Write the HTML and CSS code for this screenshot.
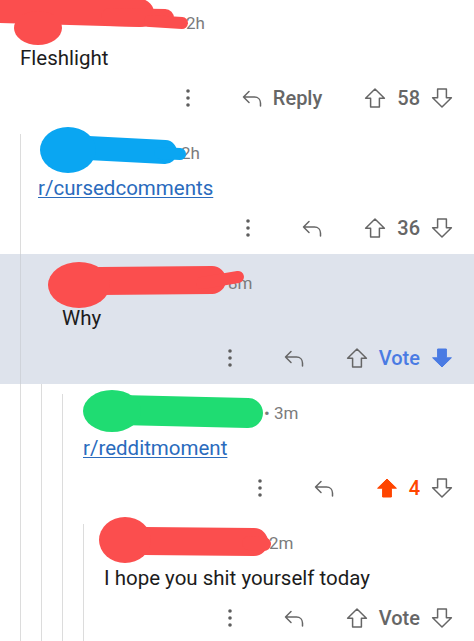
FILE: index.html
```html
<!DOCTYPE html>
<html>
<head>
<meta charset="utf-8">
<link rel="stylesheet" href="styles.css">
</head>
<body>
<svg class="defs" width="0" height="0">
  <defs>
    <path id="arrow" d="M10 1 L19.4 10.2 H14.4 V19 H5.6 V10.2 H0.6 Z"/>
    <path id="reply" d="M7 3.5 L1.5 9 L7 14.5 M1.5 9 H12.5 C16 9 18.5 11.5 18.5 15 V18"/>
  </defs>
</svg>

<div class="comment first">
  <div class="content">
    <div class="head">
      <svg class="scrib" width="166" height="24">
        <g class="red">
          <path d="M-20 -2 L120 2" stroke-width="28"/>
          <path d="M90 6 L145 7" stroke-width="18"/>
          <path d="M130 10 L162 12" stroke-width="12"/>
          <ellipse cx="18" cy="17" rx="24" ry="17"/>
        </g>
      </svg>
      <span class="time">2h</span>
    </div>
    <p class="text">Fleshlight</p>
    <div class="actions">
      <svg class="dots" width="4" height="18"><circle cx="2" cy="2" r="1.8"/><circle cx="2" cy="9" r="1.8"/><circle cx="2" cy="16" r="1.8"/></svg>
      <svg class="ico" width="20" height="20"><use href="#reply" class="ln"/></svg>
      <span class="lbl">Reply</span>
      <svg class="ico up" width="20" height="20"><use href="#arrow" class="ln"/></svg>
      <span class="count">58</span>
      <svg class="ico down" width="20" height="20"><use href="#arrow" class="ln"/></svg>
    </div>
  </div>
</div>

<div class="comment">
  <div class="rail own"></div>
  <div class="content shift">
    <div class="head">
      <svg class="scrib" width="143" height="24">
        <g class="blue">
          <path d="M50 7 L127 11" stroke-width="24"/>
          <path d="M122 12 L142 13" stroke-width="12"/>
          <ellipse cx="30" cy="9" rx="28" ry="23"/>
        </g>
      </svg>
      <span class="time">2h</span>
    </div>
    <p class="text"><a class="link" href="#">r/cursedcomments</a></p>
    <div class="actions">
      <svg class="dots" width="4" height="18"><circle cx="2" cy="2" r="1.8"/><circle cx="2" cy="9" r="1.8"/><circle cx="2" cy="16" r="1.8"/></svg>
      <svg class="ico" width="20" height="20"><use href="#reply" class="ln"/></svg>
      <svg class="ico up" width="20" height="20"><use href="#arrow" class="ln"/></svg>
      <span class="count">36</span>
      <svg class="ico down" width="20" height="20"><use href="#arrow" class="ln"/></svg>
    </div>
  </div>
</div>

<div class="comment hl">
  <div class="rail"></div>
  <div class="rail none"></div>
  <div class="content">
    <div class="head">
      <svg class="scrib" width="166" height="24">
        <g class="red">
          <path d="M38 10 L150 9" stroke-width="28"/>
          <path d="M140 12 L176 6" stroke-width="12"/>
          <ellipse cx="17" cy="14" rx="31" ry="23"/>
        </g>
      </svg>
      <span class="time">8m</span>
    </div>
    <p class="text">Why</p>
    <div class="actions">
      <svg class="dots" width="4" height="18"><circle cx="2" cy="2" r="1.8"/><circle cx="2" cy="9" r="1.8"/><circle cx="2" cy="16" r="1.8"/></svg>
      <svg class="ico" width="20" height="20"><use href="#reply" class="ln"/></svg>
      <svg class="ico up" width="20" height="20"><use href="#arrow" class="ln"/></svg>
      <span class="count blue-t">Vote</span>
      <svg class="ico down" width="20" height="20"><use href="#arrow" class="fill-blue"/></svg>
    </div>
  </div>
</div>

<div class="comment">
  <div class="rail"></div>
  <div class="rail"></div>
  <div class="rail own"></div>
  <div class="content">
    <div class="head">
      <svg class="scrib" width="181" height="24">
        <g class="green">
          <path d="M37 9 L165 12" stroke-width="30"/>
          <ellipse cx="29" cy="10" rx="29" ry="21"/>
        </g>
      </svg>
      <span class="time">• 3m</span>
    </div>
    <p class="text"><a class="link" href="#">r/redditmoment</a></p>
    <div class="actions">
      <svg class="dots" width="4" height="18"><circle cx="2" cy="2" r="1.8"/><circle cx="2" cy="9" r="1.8"/><circle cx="2" cy="16" r="1.8"/></svg>
      <svg class="ico" width="20" height="20"><use href="#reply" class="ln"/></svg>
      <svg class="ico up" width="20" height="20"><use href="#arrow" class="fill-orange"/></svg>
      <span class="count orange-t">4</span>
      <svg class="ico down" width="20" height="20"><use href="#arrow" class="ln"/></svg>
    </div>
  </div>
</div>

<div class="comment">
  <div class="rail"></div>
  <div class="rail"></div>
  <div class="rail"></div>
  <div class="rail own"></div>
  <div class="content">
    <div class="head">
      <svg class="scrib" width="165" height="24">
        <g class="red">
          <path d="M40 10 L150 11" stroke-width="28"/>
          <path d="M145 12 L160 13" stroke-width="14"/>
          <ellipse cx="21" cy="9" rx="26" ry="23"/>
        </g>
      </svg>
      <span class="time">2m</span>
    </div>
    <p class="text">I hope you shit yourself today</p>
    <div class="actions">
      <svg class="dots" width="4" height="18"><circle cx="2" cy="2" r="1.8"/><circle cx="2" cy="9" r="1.8"/><circle cx="2" cy="16" r="1.8"/></svg>
      <svg class="ico" width="20" height="20"><use href="#reply" class="ln"/></svg>
      <svg class="ico up" width="20" height="20"><use href="#arrow" class="ln"/></svg>
      <span class="count">Vote</span>
      <svg class="ico down" width="20" height="20"><use href="#arrow" class="ln"/></svg>
    </div>
  </div>
</div>
</body>
</html>
```

FILE: styles.css
```css
* { box-sizing: border-box; }
html, body { margin: 0; padding: 0; background: #ffffff; }
body {
  font-family: Roboto, "Noto Sans", "Liberation Sans", sans-serif;
  color: #1c1c1c;
  overflow: hidden;
  width: 474px;
  height: 641px;
}
.defs { position: absolute; width: 0; height: 0; }

.comment {
  display: flex;
  height: 130px;
  padding-left: 20px;
}
.comment.first { margin-top: -6px; }
.comment.hl { background: #dee3ec; }

.rail {
  width: 21px;
  flex-shrink: 0;
  border-left: 1px solid #dcdcdc;
}
.rail.own { margin-top: 10px; }
.rail.none { border-left-color: transparent; }
.hl .rail { border-left-color: #cfd3da; }
.hl .rail.none { border-left-color: transparent; }

.content {
  flex: 1;
  min-width: 0;
  padding-top: 17px;
}
.content.shift { margin-left: -3px; }

.head {
  display: flex;
  align-items: center;
  height: 24px;
}
.scrib {
  display: block;
  flex-shrink: 0;
  overflow: visible;
  position: relative;
  z-index: 1;
}
.scrib path { fill: none; stroke-linecap: round; stroke-linejoin: round; }
.red path { stroke: #fb4e4e; }
.red ellipse { fill: #fb4e4e; }
.blue path { stroke: #0aa6f2; }
.blue ellipse { fill: #0aa6f2; }
.green path { stroke: #1fdc72; }
.green ellipse { fill: #1fdc72; }

.time {
  font-size: 17px;
  color: #7b7b7b;
  white-space: nowrap;
}

.text {
  margin: 11px 0 0 0;
  height: 24px;
  line-height: 24px;
  font-size: 20.5px;
  color: #1c1c1c;
  white-space: nowrap;
}
.link {
  color: #2a6bbd;
  text-decoration: underline;
  text-decoration-thickness: 1px;
  text-underline-offset: 2px;
}

.actions {
  display: flex;
  justify-content: flex-end;
  align-items: center;
  height: 40px;
  margin-top: 8px;
  padding-right: 22px;
  color: #666666;
}
.dots { display: block; margin-right: 52px; }
.dots circle { fill: #5e5e5e; }
.ico { display: block; flex-shrink: 0; overflow: visible; }
.ln { fill: none; stroke: #666666; stroke-width: 1.5; stroke-linejoin: round; stroke-linecap: round; }
.fill-blue { fill: #4a7be3; stroke: #4a7be3; stroke-width: 1; stroke-linejoin: round; }
.fill-orange { fill: #ff4500; stroke: #ff4500; stroke-width: 1; stroke-linejoin: round; }
.down { transform: rotate(180deg); }
.up { margin-left: 43px; }
.lbl {
  margin-left: 11px;
  font-size: 20px;
  font-weight: 500;
  color: #666666;
}
.count {
  margin: 0 12px;
  font-size: 20px;
  font-weight: 500;
  color: #666666;
  line-height: 24px;
}
.blue-t { color: #4a7be3; }
.orange-t { color: #ff4500; }
```
